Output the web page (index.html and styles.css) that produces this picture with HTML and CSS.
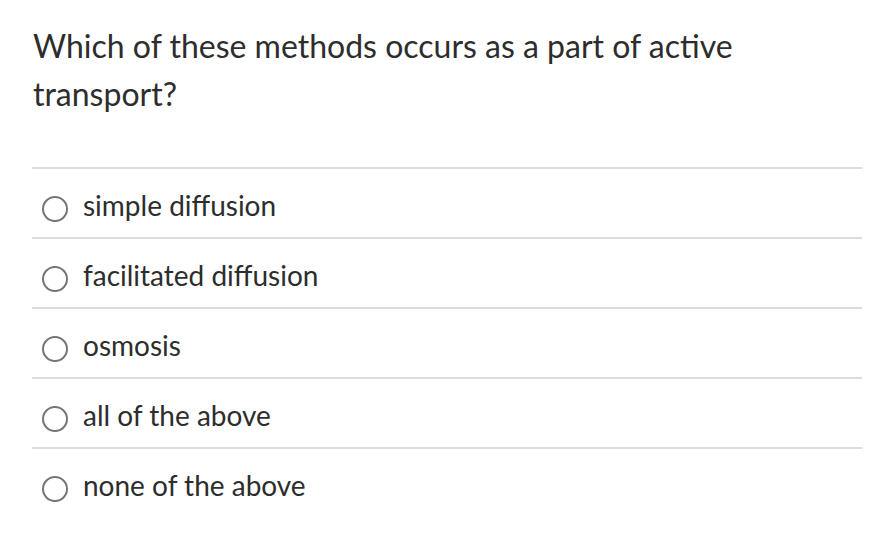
FILE: index.html
```html
<!DOCTYPE html>
<html>
<head>
<meta charset="utf-8">
<link rel="stylesheet" href="styles.css">
</head>
<body>
<div class="quiz">
  <div class="question">Which of these methods occurs as a part of active transport?</div>
  <ul class="answers">
    <li class="answer"><span class="radio"></span><span class="label">simple diffusion</span></li>
    <li class="answer"><span class="radio"></span><span class="label">facilitated diffusion</span></li>
    <li class="answer"><span class="radio"></span><span class="label">osmosis</span></li>
    <li class="answer"><span class="radio"></span><span class="label">all of the above</span></li>
    <li class="answer"><span class="radio"></span><span class="label">none of the above</span></li>
  </ul>
</div>
</body>
</html>
```
FILE: styles.css
```css
html, body {
  margin: 0;
  padding: 0;
  background: #ffffff;
}
body {
  font-family: Lato, "Liberation Sans", sans-serif;
  color: #2d2d2d;
}
.quiz {
  padding: 22px 10px 0 32px;
}
.question {
  font-size: 32px;
  line-height: 48px;
  width: 760px;
  padding-left: 1px;
  margin-bottom: 49px;
}
.answers {
  list-style: none;
  margin: 0;
  padding: 0;
}
.answer {
  display: flex;
  align-items: center;
  border-top: 2px solid #dcdcdc;
  height: 57px;
  padding-top: 11px;
  box-sizing: content-box;
}
.radio {
  width: 22px;
  height: 22px;
  border: 2px solid #757575;
  border-radius: 50%;
  margin-left: 10px;
  margin-right: 15px;
  flex: none;
}
.label {
  font-size: 28px;
  margin-bottom: 8px;
}
```
